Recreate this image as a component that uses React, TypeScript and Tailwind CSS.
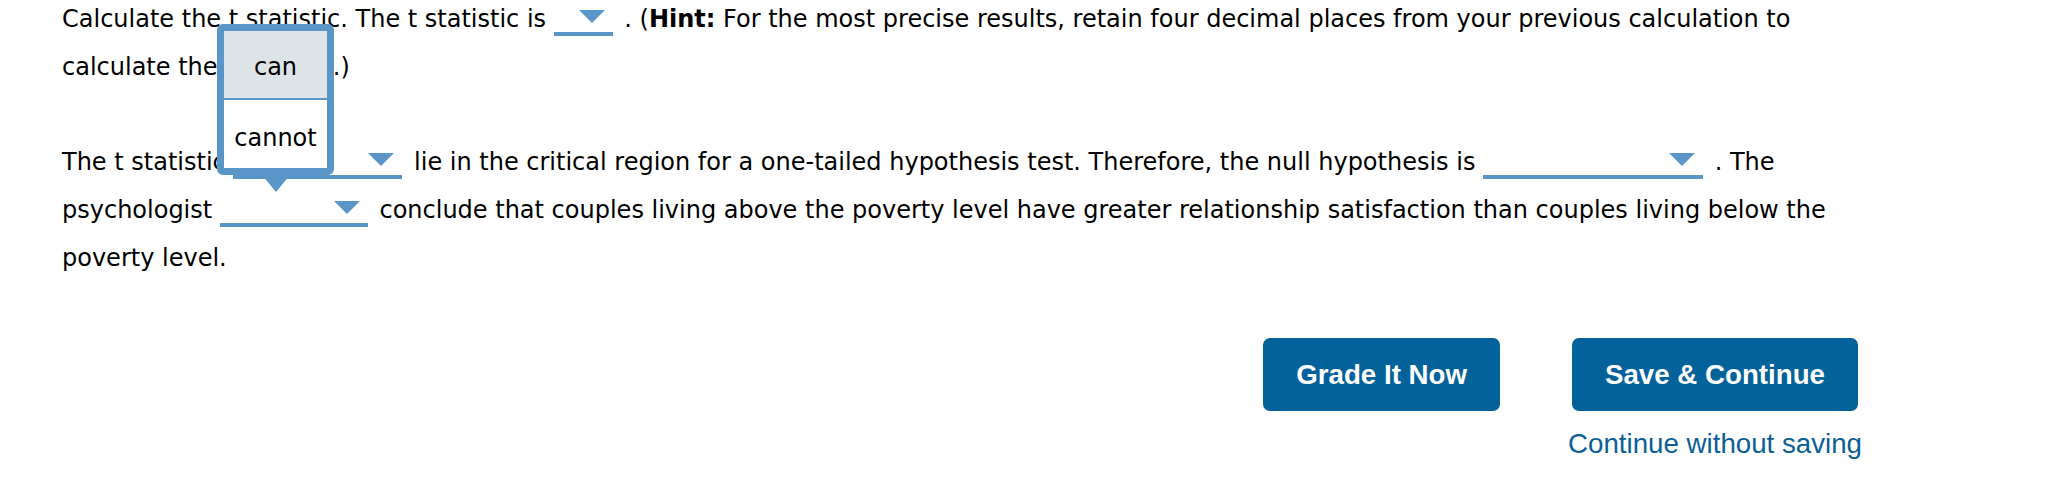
import React from 'react'

const BLUE = '#5a95c8'

interface DropdownProps {
  width: number
}

// Blank answer slot: blue underline with the little caret on the right
const Dropdown: React.FC<DropdownProps> = ({ width }) => (
  <span
    className="relative inline-block align-baseline leading-none pb-[1px] border-b-4 border-[#5a95c8] mr-[4px]"
    style={{ width }}
  >
    {'\u00a0'}
    <svg
      width="26"
      height="13"
      viewBox="0 0 26 13"
      className="absolute right-[8px] bottom-[9px]"
    >
      <polygon points="0,0 26,0 13,13" fill={BLUE} />
    </svg>
  </span>
)

const OptionsPopup = () => (
  <div className="absolute left-[155px] top-[29px] w-[117px]">
    <div className="border-[7px] border-[#5a95c8] rounded-[6px] bg-white overflow-hidden">
      <div className="h-[67px] pt-[24px] text-center bg-[#dce4e8] leading-none">
        can
      </div>
      <div className="h-[2px] bg-[#5a95c8]" />
      <div className="h-[68px] pt-[26px] text-center bg-white leading-none">
        cannot
      </div>
    </div>
    {/* pointer */}
    <svg
      width="28"
      height="17"
      viewBox="0 0 28 17"
      className="absolute left-[45px] -bottom-[17px]"
    >
      <polygon points="0,0 28,0 14,17" fill={BLUE} />
    </svg>
  </div>
)

export default function App() {
  return (
    <div className="w-full min-h-screen bg-white overflow-hidden text-black font-['DejaVu_Sans',sans-serif] text-[24px] leading-[48px]">
      <div className="relative ml-[62px] w-[1800px] -mt-[5px]">
        <p>
          Calculate the t statistic. The t statistic is <Dropdown width={59} /> . (
          <b>Hint:</b> For the most precise results, retain four decimal places from your
          previous calculation to calculate the{' '}
          <span className="tracking-[-0.35px]">t statistic</span>.)
        </p>

        <p className="mt-[47px]">
          The t statistic <Dropdown width={169} /> lie in the critical region for a
          one-tailed hypothesis test. Therefore, the null hypothesis is{' '}
          <Dropdown width={220} /> . The psychologist <Dropdown width={148} /> conclude
          that couples living above the poverty level have greater relationship
          satisfaction than couples living below the poverty level.
        </p>

        {/* Actions */}
        <div className="flex justify-end gap-[68px] mt-[56px] font-['Liberation_Sans',Arial,sans-serif]">
          <button className="h-[73px] px-[33px] rounded-[7px] bg-[#04629b] text-white font-bold text-[27.7px] leading-none flex items-center">
            Grade It Now
          </button>
          <div className="flex flex-col items-center">
            <button className="h-[73px] px-[33px] rounded-[7px] bg-[#04629b] text-white font-bold text-[27.7px] leading-none flex items-center">
              Save &amp; Continue
            </button>
            <a className="mt-[19px] text-[27.7px] leading-none text-[#0b5f95] cursor-pointer">
              Continue without saving
            </a>
          </div>
        </div>

        <OptionsPopup />
      </div>
    </div>
  )
}
